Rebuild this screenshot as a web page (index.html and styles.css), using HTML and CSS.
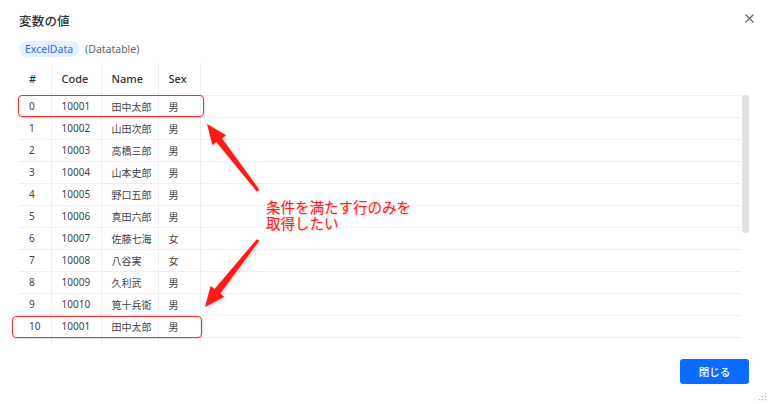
FILE: index.html
```html
<!DOCTYPE html>
<html lang="ja">
<head>
<meta charset="utf-8">
<title>変数の値</title>
<link rel="stylesheet" href="styles.css">
</head>
<body>
<div class="dialog">
  <header class="head">
    <h1 class="title">変数の値</h1>
    <button class="close" aria-label="close">
      <svg width="9" height="9" viewBox="0 0 9 9"><path d="M0.5 0.5 L8.5 8.5 M8.5 0.5 L0.5 8.5" stroke="#666" stroke-width="1.2" fill="none"/></svg>
    </button>
  </header>
  <div class="meta">
    <span class="tag">ExcelData</span>
    <span class="type">(Datatable)</span>
  </div>
  <div class="grid-wrap">
    <div class="grid-clip">
      <table class="grid">
        <colgroup>
          <col class="c-idx"><col class="c-code"><col class="c-name"><col class="c-sex"><col>
        </colgroup>
        <thead>
          <tr><th>#</th><th>Code</th><th>Name</th><th>Sex</th><th class="fill"></th></tr>
        </thead>
        <tbody>
          <tr><td>0</td><td>10001</td><td>田中太郎</td><td>男</td><td class="fill"></td></tr>
          <tr><td>1</td><td>10002</td><td>山田次郎</td><td>男</td><td class="fill"></td></tr>
          <tr><td>2</td><td>10003</td><td>高橋三郎</td><td>男</td><td class="fill"></td></tr>
          <tr><td>3</td><td>10004</td><td>山本史郎</td><td>男</td><td class="fill"></td></tr>
          <tr><td>4</td><td>10005</td><td>野口五郎</td><td>男</td><td class="fill"></td></tr>
          <tr><td>5</td><td>10006</td><td>真田六郎</td><td>男</td><td class="fill"></td></tr>
          <tr><td>6</td><td>10007</td><td>佐藤七海</td><td>女</td><td class="fill"></td></tr>
          <tr><td>7</td><td>10008</td><td>八谷実</td><td>女</td><td class="fill"></td></tr>
          <tr><td>8</td><td>10009</td><td>久利武</td><td>男</td><td class="fill"></td></tr>
          <tr><td>9</td><td>10010</td><td>筧十兵衛</td><td>男</td><td class="fill"></td></tr>
          <tr><td>10</td><td>10001</td><td>田中太郎</td><td>男</td><td class="fill"></td></tr>
          <tr class="tail"><td></td><td></td><td></td><td></td><td class="fill"></td></tr>
        </tbody>
      </table>
    </div>
    <div class="scroll-track"><div class="scroll-thumb"></div></div>
  </div>
  <footer class="foot">
    <button class="primary">閉じる</button>
  </footer>

  <div class="mark mark-top"></div>
  <div class="mark mark-bottom"></div>
  <p class="note">条件を満たす行のみを<br>取得したい</p>
  <svg class="arrows" width="768" height="404" viewBox="0 0 768 404">
    <polygon points="207,124 226,135.3 222,138.4 259.2,189.6 256.8,191.4 216.4,141.9 212.4,145.1" fill="#ff1a1a"/>
    <polygon points="205,307 224.2,296.7 220.2,293.5 259.2,240.8 256.8,239.2 214.6,289.1 210.6,285.9" fill="#ff1a1a"/>
  </svg>
  <svg class="grip" width="10" height="10" viewBox="0 0 10 10">
    <g fill="#b5b5b5">
      <rect x="8" y="0" width="1.3" height="1.3"/>
      <rect x="5" y="3" width="1.3" height="1.3"/><rect x="8" y="3" width="1.3" height="1.3"/>
      <rect x="2" y="6" width="1.3" height="1.3"/><rect x="5" y="6" width="1.3" height="1.3"/><rect x="8" y="6" width="1.3" height="1.3"/>
    </g>
  </svg>
</div>
</body>
</html>
```

FILE: styles.css
```css
* { box-sizing: border-box; }
html, body { margin: 0; padding: 0; }
body {
  width: 768px;
  height: 404px;
  overflow: hidden;
  background: #fff;
  font-family: "Noto Sans", "Noto Sans CJK JP", sans-serif;
  color: #333;
}
.dialog {
  position: relative;
  width: 768px;
  height: 404px;
  padding: 0 19px;
  display: flex;
  flex-direction: column;
}
.head {
  height: 40px;
  display: flex;
  align-items: center;
  justify-content: space-between;
}
.title {
  margin: 0;
  font-size: 12.5px;
  font-weight: 500;
  color: #333;
  letter-spacing: 0.2px;
}
.close {
  border: 0;
  background: none;
  padding: 0;
  width: 9px;
  height: 9px;
  margin-right: -5px;
  margin-top: -3px;
  display: flex;
}
.meta {
  height: 17px;
  display: flex;
  align-items: center;
  gap: 6px;
  margin-bottom: 6px;
}
.tag {
  height: 16px;
  padding: 0 6px;
  border-radius: 8px;
  background: #e6f0ff;
  color: #1f6ff5;
  font-size: 10.5px;
  line-height: 16px;
}
.type {
  color: #666;
  font-size: 10.5px;
}
.grid-wrap {
  display: flex;
  gap: 1px;
  height: 281px;
}
.grid-clip {
  flex: 1;
  overflow: hidden;
}
.grid {
  width: 100%;
  border-collapse: collapse;
  table-layout: fixed;
}
.c-idx { width: 32px; }
.c-code { width: 50px; }
.c-name { width: 57px; }
.c-sex { width: 42px; }
.grid th, .grid td {
  text-align: left;
  padding: 0 0 0 10px;
  border-right: 1px solid #f0f0f0;
  border-bottom: 1px solid #efefef;
  white-space: nowrap;
  overflow: hidden;
}
.grid th.fill, .grid td.fill { border-right: 0; }
.grid th {
  height: 32px;
  font-size: 11px;
  font-weight: 500;
  color: #333;
}
.grid td {
  height: 22px;
  font-size: 10px;
  color: #444;
}
.scroll-track {
  width: 7px;
  padding-top: 32px;
}
.scroll-thumb {
  width: 7px;
  height: 138px;
  border-radius: 3px;
  background: #e1e1e1;
}
.foot {
  flex: 1;
  display: flex;
  justify-content: flex-end;
  padding-top: 15px;
}
.primary {
  width: 69px;
  height: 25px;
  border: 0;
  border-radius: 3px;
  background: #0a6cff;
  color: #fff;
  font-family: "Noto Sans CJK JP", sans-serif;
  font-size: 10.5px;
  font-weight: 500;
  padding: 0;
}
.mark {
  position: absolute;
  border: 1.8px solid #ff2b2b;
  border-radius: 4px;
  box-shadow: 1px 1px 2px rgba(0,0,0,0.12);
}
.mark-top { left: 18px; top: 95px; width: 186px; height: 22px; }
.mark-bottom { left: 12px; top: 316px; width: 190px; height: 22px; }
.note {
  position: absolute;
  left: 266px;
  top: 199px;
  margin: 0;
  font-family: "Noto Sans CJK JP", sans-serif;
  font-size: 14.5px;
  line-height: 16px;
  color: #ff1f1f;
  text-shadow: 1px 1px 2px rgba(0,0,0,0.25);
}
.arrows {
  position: absolute;
  left: 0;
  top: 0;
  pointer-events: none;
  filter: drop-shadow(1px 1px 1.5px rgba(0,0,0,0.25));
}
.grip {
  position: absolute;
  right: 1px;
  bottom: 1px;
}
```
